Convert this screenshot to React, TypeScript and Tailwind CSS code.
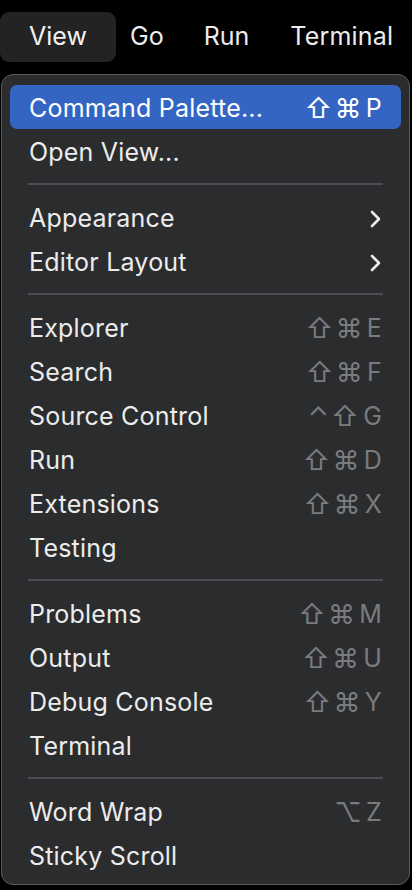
import React from "react";

type Item =
  | { kind: "item"; label: string; keys?: string[]; sub?: boolean; active?: boolean }
  | { kind: "sep" };

const items: Item[] = [
  { kind: "item", label: "Command Palette...", keys: ["⇧", "⌘", "P"], active: true },
  { kind: "item", label: "Open View..." },
  { kind: "sep" },
  { kind: "item", label: "Appearance", sub: true },
  { kind: "item", label: "Editor Layout", sub: true },
  { kind: "sep" },
  { kind: "item", label: "Explorer", keys: ["⇧", "⌘", "E"] },
  { kind: "item", label: "Search", keys: ["⇧", "⌘", "F"] },
  { kind: "item", label: "Source Control", keys: ["⌃", "⇧", "G"] },
  { kind: "item", label: "Run", keys: ["⇧", "⌘", "D"] },
  { kind: "item", label: "Extensions", keys: ["⇧", "⌘", "X"] },
  { kind: "item", label: "Testing" },
  { kind: "sep" },
  { kind: "item", label: "Problems", keys: ["⇧", "⌘", "M"] },
  { kind: "item", label: "Output", keys: ["⇧", "⌘", "U"] },
  { kind: "item", label: "Debug Console", keys: ["⇧", "⌘", "Y"] },
  { kind: "item", label: "Terminal" },
  { kind: "sep" },
  { kind: "item", label: "Word Wrap", keys: ["⌥", "Z"] },
  { kind: "item", label: "Sticky Scroll" },
];

function Chevron() {
  return (
    <svg width="12" height="18" viewBox="0 0 12 18" className="mr-[1px]">
      <polyline
        points="3,2 10,9 3,16"
        fill="none"
        stroke="#ececec"
        strokeWidth="2.6"
        strokeLinecap="round"
        strokeLinejoin="round"
      />
    </svg>
  );
}

export default function App() {
  return (
    <div
      className="w-[412px] h-[890px] bg-black overflow-hidden text-[#ececec]"
      style={{ fontFamily: '"Inter", "DejaVu Sans", sans-serif' }}
    >
      {/* menu bar */}
      <div className="h-[74px] flex items-center text-[25px]">
        <div className="h-[50px] w-[116px] flex items-center justify-center bg-[#232323] rounded-[9px] text-[#f2f2f2]">
          View
        </div>
        <div className="ml-[14px]">Go</div>
        <div className="ml-[40px]">Run</div>
        <div className="ml-[41px] tracking-[0.2px]">Terminal</div>
      </div>

      {/* dropdown */}
      <div className="ml-[1px] w-[409px] h-[811px] rounded-[12px] border border-[#58595c] ring-1 ring-black bg-[#2b2c2e] px-[8px] pt-[10px]">
        {items.map((it, i) =>
          it.kind === "sep" ? (
            <div key={i} className="h-[22px] flex items-center px-[18px]">
              <div className="h-[2px] w-full bg-[#4c4d50]" />
            </div>
          ) : (
            <div
              key={i}
              className={`h-[44px] flex items-center justify-between pl-[19px] pr-[19px] pt-[3px] rounded-[7px] text-[25px] tracking-[0.2px] ${
                it.active ? "bg-[#3465c3] text-white" : ""
              }`}
            >
              <span>{it.label}</span>
              {it.sub && <Chevron />}
              {it.keys && (
                <span
                  className={`flex items-center gap-[2px] ${
                    it.active ? "text-white" : "text-[#7a7b7e]"
                  }`}
                >
                  {it.keys.map((k, j) => (
                    <span
                      key={j}
                      className={/[A-Z]/.test(k) ? "text-[25px] ml-[2px]" : "text-[27px] leading-none"}
                    >
                      {k}
                    </span>
                  ))}
                </span>
              )}
            </div>
          )
        )}
      </div>
    </div>
  );
}
